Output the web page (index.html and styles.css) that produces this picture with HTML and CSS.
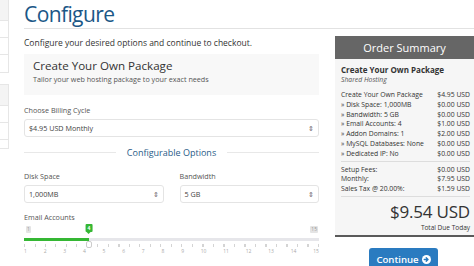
FILE: index.html
```html
<!DOCTYPE html>
<html>
<head>
<meta charset="utf-8">
<link rel="stylesheet" href="styles.css">
</head>
<body>
<div class="page">
  <aside class="sidebar">
    <div class="side-panel first">
      <div class="side-head"></div>
      <div class="side-row"></div>
      <div class="side-row"></div>
      <div class="side-row"></div>
    </div>
    <div class="side-panel second">
      <div class="side-head"></div>
      <div class="side-row"></div>
      <div class="side-row"></div>
      <div class="side-row short"></div>
    </div>
  </aside>
  <div class="content">
    <h1 class="title">Configure</h1>
    <div class="columns">
      <div class="main">
        <p class="intro">Configure your desired options and continue to checkout.</p>
        <div class="product-box">
          <div class="product-name">Create Your Own Package</div>
          <div class="product-desc">Tailor your web hosting package to your exact needs</div>
        </div>
        <div class="field">
          <div class="label">Choose Billing Cycle</div>
          <div class="select"><span>$4.95 USD Monthly</span><span class="arrows">&#8661;</span></div>
        </div>
        <div class="section-title"><span class="line"></span><span class="section-text">Configurable Options</span><span class="line"></span></div>
        <div class="two-col">
          <div class="field">
            <div class="label">Disk Space</div>
            <div class="select"><span>1,000MB</span><span class="arrows">&#8661;</span></div>
          </div>
          <div class="field">
            <div class="label">Bandwidth</div>
            <div class="select"><span>5 GB</span><span class="arrows">&#8661;</span></div>
          </div>
        </div>
        <div class="field email">
          <div class="label">Email Accounts</div>
          <div class="slider">
            <div class="tags">
              <span class="tag min">1</span>
              <span class="tag cur" style="left:22%">4</span>
              <span class="tag max">15</span>
            </div>
            <div class="track"><div class="fill" style="width:22%"></div><span class="handle" style="left:22%"></span></div>
            <div class="ticks"></div>
            <div class="nums">
              <span>1</span><span>2</span><span>3</span><span>4</span><span>5</span><span>6</span><span>7</span><span>8</span><span>9</span><span>10</span><span>11</span><span>12</span><span>13</span><span>14</span><span>15</span>
            </div>
          </div>
        </div>
      </div>
      <div class="side-summary">
        <div class="summary">
          <div class="summary-head">Order Summary</div>
          <div class="summary-body">
            <div class="pkg-name">Create Your Own Package</div>
            <div class="pkg-group">Shared Hosting</div>
            <div class="lines first-lines">
              <div class="line-item"><span>Create Your Own Package</span><span>$4.95 USD</span></div>
              <div class="line-item"><span>&raquo; Disk Space: 1,000MB</span><span>$0.00 USD</span></div>
              <div class="line-item"><span>&raquo; Bandwidth: 5 GB</span><span>$0.00 USD</span></div>
              <div class="line-item"><span>&raquo; Email Accounts: 4</span><span>$1.00 USD</span></div>
              <div class="line-item"><span>&raquo; Addon Domains: 1</span><span>$2.00 USD</span></div>
              <div class="line-item"><span>&raquo; MySQL Databases: None</span><span>$0.00 USD</span></div>
              <div class="line-item"><span>&raquo; Dedicated IP: No</span><span>$0.00 USD</span></div>
            </div>
            <div class="lines">
              <div class="line-item"><span>Setup Fees:</span><span>$0.00 USD</span></div>
              <div class="line-item"><span>Monthly:</span><span>$7.95 USD</span></div>
              <div class="line-item"><span>Sales Tax @ 20.00%:</span><span>$1.59 USD</span></div>
            </div>
            <div class="total">$9.54 USD</div>
            <div class="total-label">Total Due Today</div>
          </div>
        </div>
        <div class="btn-wrap">
          <button class="btn">Continue <svg class="btn-icon" viewBox="0 0 16 16" width="9" height="9"><circle cx="8" cy="8" r="8" fill="#fff"/><path d="M4 8h6M7.5 4.8L10.7 8 7.5 11.2" stroke="#2a7bc0" stroke-width="2.4" fill="none" stroke-linecap="round" stroke-linejoin="round"/></svg></button>
        </div>
      </div>
    </div>
  </div>
</div>
</body>
</html>
```
FILE: styles.css
```css
* { box-sizing: border-box; }
html, body { margin: 0; padding: 0; background: #fff; }
body {
  font-family: "Open Sans", "Liberation Sans", sans-serif;
  color: #333;
  width: 474px;
  height: 266px;
  overflow: hidden;
}
.page { display: flex; }
.sidebar { width: 9px; margin-right: 15px; flex: none; }
.side-panel {
  border: 1px solid #e6e6e6;
  border-left: none;
  background: #fff;
}
.side-panel.first { margin-top: -1px; }
.side-panel.second { margin-top: 11px; }
.side-head { height: 21px; background: #f4f4f4; border-bottom: 1px solid #e6e6e6; }
.side-row { height: 17px; border-bottom: 1px solid #e6e6e6; }
.side-row:last-child { border-bottom: none; }
.side-row.short { height: 8px; }
.content { width: 450px; flex: none; }
.title {
  margin: 0;
  font-family: "Open Sans", sans-serif;
  font-weight: 400;
  font-size: 21px;
  line-height: 28px;
  color: #1b5787;
  border-bottom: 1px solid #e2e2e2;
  height: 29px;
  letter-spacing: -0.6px;
}
.columns { display: flex; }
.main { width: 295px; flex: none; }
.intro { margin: 8px 0 0; font-size: 8.5px; line-height: 12px; color: #333; }
.product-box {
  margin-top: 5px;
  background: #f8f8f8;
  height: 41px;
  padding: 3px 9px 0;
}
.product-name { font-size: 11.6px; line-height: 17px; color: #333; }
.product-desc { font-size: 7.2px; line-height: 10px; color: #555; }
.field { margin-top: 10px; }
.label { font-size: 7.2px; line-height: 10px; color: #555; }
.select {
  margin-top: 4px;
  height: 18px;
  border: 1px solid #e4e4e4;
  border-radius: 3px;
  display: flex;
  justify-content: space-between;
  align-items: center;
  padding: 0 4px;
  font-size: 7.2px;
  color: #444;
  background: #fff;
}
.arrows { font-size: 7px; color: #666; }
.section-title {
  display: flex;
  align-items: center;
  margin-top: 7px;
  height: 16px;
}
.section-title .line { flex: 1; height: 1px; background: #e8e8e8; }
.section-text { padding: 0 11px; font-size: 9px; color: #2a5c88; }
.two-col { display: flex; gap: 16px; }
.two-col .field { flex: 1; margin-top: 11px; }
.field.email { margin-top: 9px; }
.slider { margin-top: 2px; }
.tags { position: relative; height: 12px; }
.tag {
  position: absolute;
  top: 2px;
  font-size: 5px;
  line-height: 7px;
  padding: 0 1px;
  border-radius: 1px;
  background: #e4e4e4;
  color: #999;
}
.tag.min { left: 2px; }
.tag.max { right: 1px; }
.tag.cur {
  background: #35b734;
  color: #fff;
  font-weight: 700;
  transform: translateX(-50%);
  padding: 0 2px;
  top: 0;
  line-height: 8px;
}
.tag.cur::after {
  content: "";
  position: absolute;
  left: 50%;
  bottom: -2px;
  margin-left: -2px;
  border-left: 2px solid transparent;
  border-right: 2px solid transparent;
  border-top: 2px solid #35b734;
}
.track { position: relative; height: 3px; background: #e6e6ea; margin-top: 2px; }
.fill { height: 3px; background: #35b734; }
.handle {
  position: absolute;
  top: 3px;
  width: 6px;
  height: 7px;
  margin-left: -3px;
  border: 1px solid #ccc;
  border-radius: 2px;
  background: #fff;
}
.ticks {
  height: 5px;
  margin-top: 2px;
  background-image: repeating-linear-gradient(90deg, #d4d4d4 0 1px, transparent 1px 10.5px);
  background-size: 100% 3px;
  background-repeat: no-repeat;
  background-position: 0 1px;
}
.nums { display: flex; justify-content: space-between; font-size: 5px; color: #aaa; line-height: 7px; }
.side-summary { width: 139px; margin-left: 16px; flex: none; }
.summary {
  margin-top: 7px;
  background: #f6f6f6;
  border-bottom: 2px solid #5a5a5a;
}
.summary-head {
  height: 23px;
  background: #666;
  color: #fff;
  font-size: 11px;
  text-align: center;
  line-height: 23px;
}
.summary-body { padding: 5px 4px 3px 6px; }
.pkg-name { font-size: 8px; font-weight: 700; line-height: 11px; color: #333; }
.pkg-group { font-size: 6.8px; font-style: italic; line-height: 9px; color: #555; }
.lines { border-bottom: 1px solid #ddd; padding: 3px 0 2px; }
.lines.first-lines { margin-top: 3px; }
.line-item {
  display: flex;
  justify-content: space-between;
  font-size: 6.8px;
  line-height: 9.8px;
  color: #333;
}
.total { text-align: right; font-size: 17px; line-height: 22px; color: #333; margin-top: 4px; letter-spacing: -0.2px; }
.total-label { text-align: right; font-size: 6.5px; line-height: 9px; color: #333; }
.btn-wrap { display: flex; justify-content: center; padding-right: 2px; margin-top: 11px; }
.btn {
  background: #2a7bc0;
  color: #fff;
  border: none;
  border-radius: 3px;
  font-family: "Open Sans", sans-serif;
  font-weight: 600;
  font-size: 9.6px;
  height: 24px;
  padding: 0 7px;
  display: flex;
  align-items: center;
  gap: 3px;
}
.btn-icon { display: block; }
```
